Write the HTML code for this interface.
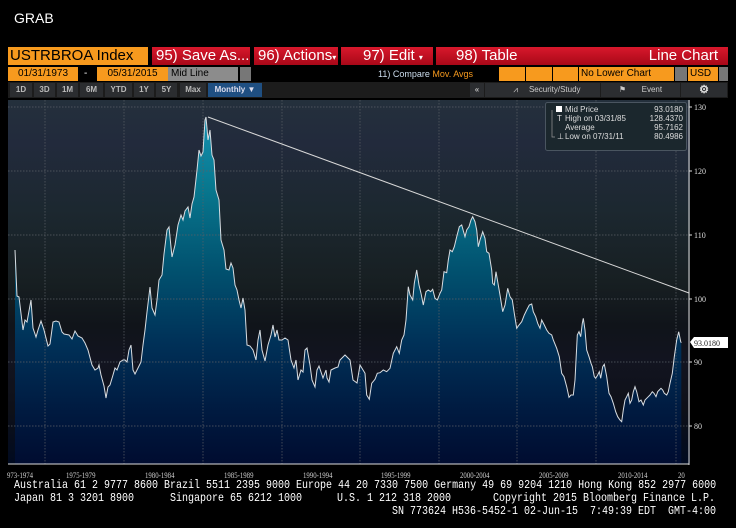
<!DOCTYPE html>
<html><head><meta charset="utf-8">
<style>
*{margin:0;padding:0;box-sizing:border-box}
body{width:736px;height:528px;background:#000;position:relative;overflow:hidden;font-family:"Liberation Sans",sans-serif;color:#fff}
.a{position:absolute;white-space:pre}
.org{background:#f79a1e;color:#000}
.red{background:linear-gradient(#d8182c,#a80818);color:#fff;font-size:15px;line-height:17px}
.btn{background:#2b2d30;color:#bbb;font-size:8px;font-weight:bold;text-align:center;line-height:14px}
.ft{font-family:"Liberation Mono",monospace;font-size:10px;letter-spacing:0;color:#fff;line-height:12px;transform:scaleY(1.15);transform-origin:top left}
.yr{font-family:"Liberation Serif",serif;font-size:8px;color:#ccc;transform:scaleX(0.85);transform-origin:left}
</style></head><body>
<div class="a" style="left:14px;top:10px;font-size:14px">GRAB</div>

<div class="a org" style="left:8px;top:47px;width:140px;height:18px;font-size:15px;line-height:18px;padding-left:2px">USTRBROA Index</div>
<div class="a red" style="left:152px;top:47px;width:98px;height:18px;padding-left:4px">95) Save As...</div>
<div class="a red" style="left:254px;top:47px;width:84px;height:18px;padding-left:4px">96) Actions<span style="font-size:8px">▾</span></div>
<div class="a red" style="left:341px;top:47px;width:92px;height:18px;padding-left:22px">97) Edit <span style="font-size:8px">▾</span></div>
<div class="a red" style="left:436px;top:47px;width:92px;height:18px;padding-left:20px">98) Table</div>
<div class="a red" style="left:528px;top:47px;width:200px;height:18px;text-align:right;padding-right:10px">Line Chart</div>

<div class="a org" style="left:8px;top:67px;width:70px;height:14px;font-size:10px;line-height:14px;text-align:center">01/31/1973</div>
<div class="a" style="left:84px;top:67px;font-size:10px;line-height:14px">-</div>
<div class="a org" style="left:97px;top:67px;width:71px;height:14px;font-size:10px;line-height:14px;text-align:center">05/31/2015</div>
<div class="a" style="left:168px;top:67px;width:70px;height:14px;background:#8c8c8c;color:#000;font-size:10px;line-height:14px;padding-left:3px">Mid Line</div>
<div class="a" style="left:240px;top:67px;width:11px;height:14px;background:#777"></div>
<div class="a" style="left:378px;top:67px;font-size:9px;line-height:14px;color:#cde">11) Compare <span style="color:#f79a1e">Mov. Avgs</span></div>
<div class="a org" style="left:499px;top:67px;width:26px;height:14px"></div>
<div class="a org" style="left:526px;top:67px;width:26px;height:14px"></div>
<div class="a org" style="left:553px;top:67px;width:25px;height:14px"></div>
<div class="a org" style="left:579px;top:67px;width:95px;height:14px;font-size:10px;line-height:14px;padding-left:2px">No Lower Chart</div>
<div class="a" style="left:675px;top:67px;width:12px;height:14px;background:#777"></div>
<div class="a org" style="left:688px;top:67px;width:30px;height:14px;font-size:10px;line-height:14px;padding-left:2px">USD</div>
<div class="a" style="left:719px;top:67px;width:9px;height:14px;background:#777"></div>

<div class="a" style="left:8px;top:82px;width:720px;height:16px;background:#1c1c1c"></div>
<div class="a btn" style="left:10px;top:83px;width:22px">1D</div>
<div class="a btn" style="left:34px;top:83px;width:21px">3D</div>
<div class="a btn" style="left:57px;top:83px;width:21px">1M</div>
<div class="a btn" style="left:80px;top:83px;width:23px">6M</div>
<div class="a btn" style="left:105px;top:83px;width:27px">YTD</div>
<div class="a btn" style="left:134px;top:83px;width:20px">1Y</div>
<div class="a btn" style="left:156px;top:83px;width:21px">5Y</div>
<div class="a btn" style="left:180px;top:83px;width:26px">Max</div>
<div class="a btn" style="left:208px;top:83px;width:54px;background:#1f4f82;color:#dde">Monthly ▼</div>
<div class="a btn" style="left:470px;top:83px;width:14px">«</div>
<div class="a btn" style="left:485px;top:83px;width:115px;color:#ccc;font-weight:normal">    ⩘     Security/Study</div>
<div class="a btn" style="left:601px;top:83px;width:79px;color:#ccc;font-weight:normal">⚑       Event</div>
<div class="a btn" style="left:681px;top:83px;width:46px;color:#ddd;font-size:11px">⚙</div>

<svg class="a" style="left:0;top:98px" width="736" height="380" viewBox="0 98 736 380">
<defs>
<linearGradient id="bg" x1="0" y1="100" x2="0" y2="464" gradientUnits="userSpaceOnUse">
<stop offset="0" stop-color="#24303c"/><stop offset="0.12" stop-color="#222a3c"/>
<stop offset="0.3" stop-color="#1c2830"/><stop offset="0.5" stop-color="#171f22"/>
<stop offset="0.62" stop-color="#10141a"/><stop offset="0.72" stop-color="#121420"/>
<stop offset="0.85" stop-color="#0e1018"/><stop offset="1" stop-color="#000a20"/>
</linearGradient>
<linearGradient id="fl" x1="0" y1="117" x2="0" y2="464" gradientUnits="userSpaceOnUse">
<stop offset="0" stop-color="#1590b0"/><stop offset="0.2" stop-color="#08788f"/>
<stop offset="0.45" stop-color="#01506e"/><stop offset="0.65" stop-color="#003158"/>
<stop offset="0.85" stop-color="#001a40"/><stop offset="1" stop-color="#000c30"/>
</linearGradient>
</defs>
<rect x="8" y="100" width="682" height="364" fill="url(#bg)"/>
<path id="area" fill="url(#fl)"/>
<g stroke="#5a5f65" stroke-width="0.7" stroke-dasharray="1.5,1.5">
<line x1="8" y1="107" x2="688" y2="107"/><line x1="8" y1="171" x2="688" y2="171"/>
<line x1="8" y1="235" x2="688" y2="235"/><line x1="8" y1="299" x2="688" y2="299"/>
<line x1="8" y1="362" x2="688" y2="362"/><line x1="8" y1="426" x2="688" y2="426"/>
<line x1="45" y1="100" x2="45" y2="464"/><line x1="124" y1="100" x2="124" y2="464"/>
<line x1="203" y1="100" x2="203" y2="464"/><line x1="282" y1="100" x2="282" y2="464"/>
<line x1="360" y1="100" x2="360" y2="464"/><line x1="439" y1="100" x2="439" y2="464"/>
<line x1="517" y1="100" x2="517" y2="464"/><line x1="596" y1="100" x2="596" y2="464"/>
<line x1="676" y1="100" x2="676" y2="464"/>
</g>
<path id="ln" fill="none" stroke="#d8dde2" stroke-width="1"/>
<line x1="208" y1="117" x2="689" y2="293" stroke="#d8d8d8" stroke-width="1"/>
<line x1="689" y1="100" x2="689" y2="465" stroke="#ddd" stroke-width="1"/>
<line x1="8" y1="464" x2="689" y2="464" stroke="#ddd" stroke-width="1"/>
<g fill="#ddd" font-family="Liberation Serif,serif" font-size="8">
<text x="694" y="110">130</text><text x="694" y="174">120</text><text x="694" y="238">110</text>
<text x="694" y="302">100</text><text x="694" y="365">90</text><text x="694" y="429">80</text>
</g>
<g stroke="#ddd"><line x1="689" y1="107" x2="692" y2="107"/><line x1="689" y1="171" x2="692" y2="171"/><line x1="689" y1="235" x2="692" y2="235"/><line x1="689" y1="299" x2="692" y2="299"/><line x1="689" y1="362" x2="692" y2="362"/><line x1="689" y1="426" x2="692" y2="426"/></g>
<path d="M690 342 L694 337 H728 V348 H694 Z" fill="#fff"/>
<text x="694" y="346" font-family="Liberation Serif,serif" font-size="8" fill="#222">93.0180</text>
<rect x="545.5" y="102.5" width="141" height="48" rx="2" fill="#1b272d" stroke="#4a5560"/>
<g font-size="8" fill="#ddd" font-family="Liberation Sans,sans-serif">
<rect x="556" y="106" width="6" height="6" fill="#fff"/>
<text x="565" y="112">Mid Price</text><text x="683" y="112" text-anchor="end">93.0180</text>
<text x="565" y="121">High on 03/31/85</text><text x="683" y="121" text-anchor="end">128.4370</text>
<text x="565" y="130">Average</text><text x="683" y="130" text-anchor="end">95.7162</text>
<text x="565" y="139">Low on 07/31/11</text><text x="683" y="139" text-anchor="end">80.4986</text>
<text x="557" y="121">T</text><text x="557" y="139">⊥</text>
</g>
<path d="M552 110 V137 H555" fill="none" stroke="#999" stroke-width="0.7"/>
</svg>

<div class="a yr" style="left:7px;top:471px">973-1974</div>
<div class="a yr" style="left:66px;top:471px">1975-1979</div>
<div class="a yr" style="left:145px;top:471px">1980-1984</div>
<div class="a yr" style="left:224px;top:471px">1985-1989</div>
<div class="a yr" style="left:303px;top:471px">1990-1994</div>
<div class="a yr" style="left:381px;top:471px">1995-1999</div>
<div class="a yr" style="left:460px;top:471px">2000-2004</div>
<div class="a yr" style="left:539px;top:471px">2005-2009</div>
<div class="a yr" style="left:618px;top:471px">2010-2014</div>
<div class="a yr" style="left:678px;top:471px">20</div>

<div class="a ft" style="left:14px;top:480px">Australia 61 2 9777 8600 Brazil 5511 2395 9000 Europe 44 20 7330 7500 Germany 49 69 9204 1210 Hong Kong 852 2977 6000</div>
<div class="a ft" style="left:14px;top:493px">Japan 81 3 3201 8900</div>
<div class="a ft" style="left:170px;top:493px">Singapore 65 6212 1000</div>
<div class="a ft" style="left:337px;top:493px">U.S. 1 212 318 2000</div>
<div class="a ft" style="left:493px;top:493px">Copyright 2015 Bloomberg Finance L.P.</div>
<div class="a ft" style="left:392px;top:506px">SN 773624 H536-5452-1 02-Jun-15  7:49:39 EDT  GMT-4:00</div>

<script>
var L=[[15,250],[17,296],[19,297],[23,330],[25,320],[27,322],[31,300],[33,328],[36,337],[38,330],[41,321],[44,330],[48,346],[50,344],[53,322],[56,321],[59,322],[62,332],[64,334],[69,335],[72,339],[75,331],[78,336],[82,338],[85,343],[88,350],[92,365],[95,370],[98,368],[99,365],[101,375],[104,386],[106,398],[108,387],[110,385],[113,375],[115,368],[117,370],[120,362],[123,360],[125,360],[127,362],[129,350],[131,345],[133,370],[135,374],[138,368],[141,362],[143,345],[145,330],[147,312],[150,287],[152,308],[155,315],[157,300],[159,280],[162,275],[164,254],[167,230],[169,227],[172,257],[175,245],[178,225],[181,215],[183,220],[185,211],[188,207],[190,218],[192,204],[194,197],[197,170],[199,150],[201,156],[203,152],[205,120],[206,117],[208,140],[210,130],[212,155],[214,160],[216,190],[219,200],[221,240],[224,250],[226,269],[229,270],[231,263],[233,268],[235,285],[237,290],[239,300],[241,308],[243,298],[245,310],[247,345],[250,346],[253,350],[256,360],[258,340],[260,330],[262,350],[265,361],[268,345],[271,335],[273,325],[275,337],[277,330],[279,340],[282,340],[285,338],[288,340],[291,360],[294,368],[296,360],[298,380],[301,370],[303,372],[305,350],[307,348],[310,365],[312,380],[315,387],[317,370],[319,366],[323,378],[326,370],[327,378],[329,382],[331,370],[335,368],[338,367],[340,360],[345,355],[350,360],[353,380],[357,383]];
var R=[[0,795],[15,820],[20,885],[28,898],[35,850],[45,838],[52,820],[60,818],[70,810],[80,815],[90,805],[100,760],[110,740],[118,760],[125,720],[132,705],[138,660],[145,560],[150,585],[158,600],[163,550],[170,510],[177,555],[183,580],[190,615],[198,575],[205,570],[212,575],[218,568],[225,595],[232,600],[240,580],[245,570],[252,515],[260,518],[265,480],[270,450],[277,455],[283,440],[290,410],[298,380],[305,375],[310,392],[315,410],[320,390],[327,380],[333,360],[338,350],[345,365],[350,390],[355,440],[360,420],[368,395],[375,415],[380,455],[387,460],[395,510],[398,550],[403,555],[408,515],[413,545],[420,585],[428,635],[435,615],[443,565],[450,590],[457,600],[463,640],[470,685],[477,675],[485,665],[493,645],[500,630],[508,615],[515,612],[520,635],[527,650],[533,670],[540,685],[545,660],[553,675],[560,690],[567,700],[575,705],[580,720],[590,745],[598,770],[605,820],[612,830],[620,860],[627,892],[633,885],[640,885],[645,840],[652,705],[657,695],[662,710],[667,670],[670,655],[675,690],[680,750],[687,770],[693,790],[697,800],[703,830],[707,835],[713,825],[718,815],[722,835],[728,800],[733,793],[740,830],[747,880],[753,890],[760,910],[767,935],[773,950],[780,960],[785,965],[790,930],[795,900],[800,890],[805,880],[810,910],[815,900],[820,875],[825,860],[830,875],[837,905],[843,900],[850,915],[855,900],[860,895],[865,890],[870,885],[877,875],[882,880],[888,890],[893,875],[898,870],[903,865],[908,870],[913,880],[920,885],[925,875],[930,850],[937,820],[943,770],[950,720],[956,695],[962,725],[964,728]];
var P=L.concat(R.map(function(p){return [360+p[0]/3,100+p[1]/3]}));
var d=P.map(function(p,i){return (i?'L':'M')+p[0].toFixed(1)+' '+p[1].toFixed(1)}).join(' ');
document.getElementById('ln').setAttribute('d',d);
document.getElementById('area').setAttribute('d',d+' L'+P[P.length-1][0].toFixed(1)+' 464 L15 464 Z');
</script>
</body></html>
